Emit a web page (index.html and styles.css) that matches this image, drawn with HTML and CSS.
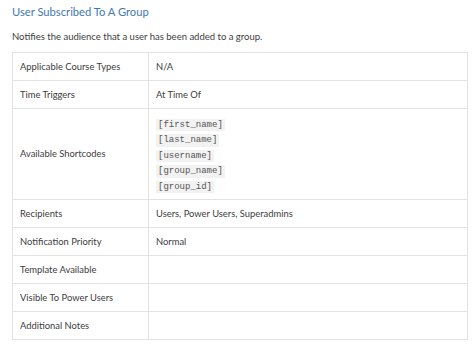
FILE: index.html
```html
<!DOCTYPE html>
<html>
<head>
<meta charset="utf-8">
<link rel="stylesheet" href="styles.css">
</head>
<body>
<div class="page">
  <h2 class="title">User Subscribed To A Group</h2>
  <p class="desc">Notifies the audience that a user has been added to a group.</p>
  <table class="info">
    <tr><td class="key">Applicable Course Types</td><td>N/A</td></tr>
    <tr><td class="key">Time Triggers</td><td>At Time Of</td></tr>
    <tr class="codes"><td class="key">Available Shortcodes</td><td>
      <div class="codelist">
        <code>[first_name]</code>
        <code>[last_name]</code>
        <code>[username]</code>
        <code>[group_name]</code>
        <code>[group_id]</code>
      </div>
    </td></tr>
    <tr><td class="key">Recipients</td><td>Users, Power Users, Superadmins</td></tr>
    <tr><td class="key">Notification Priority</td><td>Normal</td></tr>
    <tr><td class="key">Template Available</td><td></td></tr>
    <tr><td class="key">Visible To Power Users</td><td></td></tr>
    <tr><td class="key">Additional Notes</td><td></td></tr>
  </table>
</div>
</body>
</html>
```
FILE: styles.css
```css
html, body {
  margin: 0;
  padding: 0;
  background: #ffffff;
}
body {
  font-family: Lato, "Open Sans", sans-serif;
  color: #3d3d3d;
}
.page {
  padding: 4px 7px 0 12px;
}
.title {
  margin: 0;
  font-size: 11.2px;
  font-weight: 400;
  line-height: 16px;
  color: #3f7ab3;
}
.desc {
  margin: 10px 0 0 0;
  font-size: 9.5px;
  line-height: 14px;
}
.info {
  margin-top: 8px;
  width: 456px;
  border-collapse: collapse;
  font-size: 9.4px;
  border: 1px solid #e2e2e2;
}
.info td {
  border: 1px solid #e2e2e2;
  height: 27px;
  padding: 0 7px;
  vertical-align: middle;
  line-height: 14px;
}
.info td.key {
  width: 121px;
}
.codes td {
  height: 90px;
}
.codelist {
  display: flex;
  flex-direction: column;
  align-items: flex-start;
  gap: 3px;
  padding: 4px 0 0 0;
}
code {
  font-family: "Liberation Mono", "DejaVu Sans Mono", monospace;
  font-size: 9px;
  line-height: 12.5px;
  background: #f2f2f2;
  color: #555;
  padding: 0 2px;
}
```
